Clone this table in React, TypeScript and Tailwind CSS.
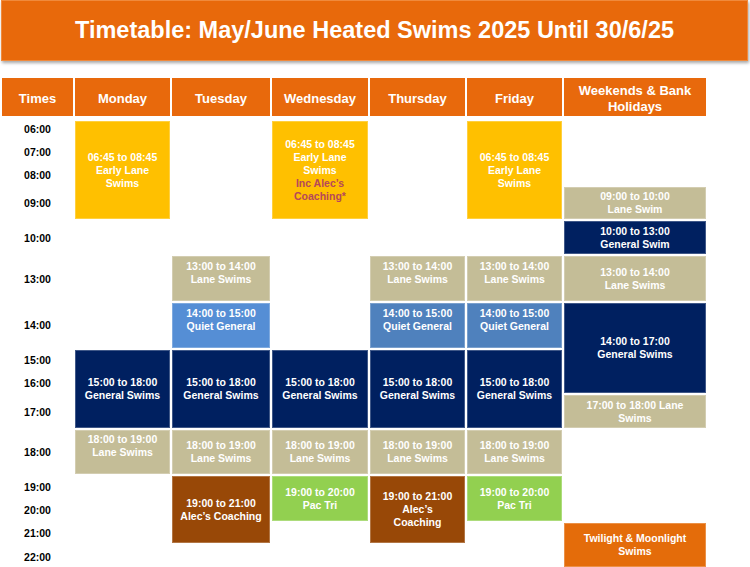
import type { JSX } from "react";

type Slot = {
	id: string;
	place: string;
	bg: string;
	lines: string[];
	note?: string[];
	lift?: boolean;
};

const COLS = "grid grid-cols-[71px_95px_98px_96px_95px_95px_142px] gap-[2px]";

const days = ["Monday", "Tuesday", "Wednesday", "Thursday", "Friday"];

// label + height of its slot, so the text centres land on the printed grid
const times: { t: string; h: string }[] = [
	{ t: "06:00", h: "h-[23px]" },
	{ t: "07:00", h: "h-[23px]" },
	{ t: "08:00", h: "h-[28px]" },
	{ t: "09:00", h: "h-[35px]" },
	{ t: "10:00", h: "h-[41px]" },
	{ t: "13:00", h: "h-[46px]" },
	{ t: "14:00", h: "h-[35px]" },
	{ t: "15:00", h: "h-[23px]" },
	{ t: "16:00", h: "h-[29px]" },
	{ t: "17:00", h: "h-[40px]" },
	{ t: "18:00", h: "h-[35px]" },
	{ t: "19:00", h: "h-[23px]" },
	{ t: "20:00", h: "h-[23px]" },
	{ t: "21:00", h: "h-[24px]" },
	{ t: "22:00", h: "h-[14px]" }
];

const YELLOW = "bg-[#ffc000]";
const TAN = "bg-[#c4bd97]";
const NAVY = "bg-[#002060]";
const BROWN = "bg-[#984807]";
const GREEN = "bg-[#92d050]";

const slots: Slot[] = [
	// Monday
	{ id: "mon-early", place: "col-start-2 row-start-1 row-span-2", bg: YELLOW, lines: ["06:45 to 08:45", "Early Lane", "Swims"] },
	{ id: "mon-gen", place: "col-start-2 row-start-6 row-span-2", bg: NAVY, lines: ["15:00 to 18:00", "General Swims"] },
	{ id: "mon-lane", place: "col-start-2 row-start-8", bg: TAN, lines: ["18:00 to 19:00", "Lane Swims"], lift: true },
	// Tuesday
	{ id: "tue-lane1", place: "col-start-3 row-start-4", bg: TAN, lines: ["13:00 to 14:00", "Lane Swims"], lift: true },
	{ id: "tue-quiet", place: "col-start-3 row-start-5", bg: "bg-[#558ed5]", lines: ["14:00 to 15:00", "Quiet General"], lift: true },
	{ id: "tue-gen", place: "col-start-3 row-start-6 row-span-2", bg: NAVY, lines: ["15:00 to 18:00", "General Swims"] },
	{ id: "tue-lane2", place: "col-start-3 row-start-8", bg: TAN, lines: ["18:00 to 19:00", "Lane Swims"] },
	{ id: "tue-alec", place: "col-start-3 row-start-9 row-span-2", bg: BROWN, lines: ["19:00 to 21:00", "Alec’s Coaching"] },
	// Wednesday
	{
		id: "wed-early",
		place: "col-start-4 row-start-1 row-span-2",
		bg: YELLOW,
		lines: ["06:45 to 08:45", "Early Lane", "Swims"],
		note: ["Inc Alec’s", "Coaching*"]
	},
	{ id: "wed-gen", place: "col-start-4 row-start-6 row-span-2", bg: NAVY, lines: ["15:00 to 18:00", "General Swims"] },
	{ id: "wed-lane", place: "col-start-4 row-start-8", bg: TAN, lines: ["18:00 to 19:00", "Lane Swims"] },
	{ id: "wed-pac", place: "col-start-4 row-start-9", bg: GREEN, lines: ["19:00 to 20:00", "Pac Tri"] },
	// Thursday
	{ id: "thu-lane1", place: "col-start-5 row-start-4", bg: TAN, lines: ["13:00 to 14:00", "Lane Swims"], lift: true },
	{ id: "thu-quiet", place: "col-start-5 row-start-5", bg: "bg-[#4f81bd]", lines: ["14:00 to 15:00", "Quiet General"], lift: true },
	{ id: "thu-gen", place: "col-start-5 row-start-6 row-span-2", bg: NAVY, lines: ["15:00 to 18:00", "General Swims"] },
	{ id: "thu-lane2", place: "col-start-5 row-start-8", bg: TAN, lines: ["18:00 to 19:00", "Lane Swims"] },
	{ id: "thu-alec", place: "col-start-5 row-start-9 row-span-2", bg: BROWN, lines: ["19:00 to 21:00", "Alec’s", "Coaching"] },
	// Friday
	{ id: "fri-early", place: "col-start-6 row-start-1 row-span-2", bg: YELLOW, lines: ["06:45 to 08:45", "Early Lane", "Swims"] },
	{ id: "fri-lane1", place: "col-start-6 row-start-4", bg: TAN, lines: ["13:00 to 14:00", "Lane Swims"], lift: true },
	{ id: "fri-quiet", place: "col-start-6 row-start-5", bg: "bg-[#4f81bd]", lines: ["14:00 to 15:00", "Quiet General"], lift: true },
	{ id: "fri-gen", place: "col-start-6 row-start-6 row-span-2", bg: NAVY, lines: ["15:00 to 18:00", "General Swims"] },
	{ id: "fri-lane2", place: "col-start-6 row-start-8", bg: TAN, lines: ["18:00 to 19:00", "Lane Swims"] },
	{ id: "fri-pac", place: "col-start-6 row-start-9", bg: GREEN, lines: ["19:00 to 20:00", "Pac Tri"] },
	// Weekends & bank holidays
	{ id: "we-lane1", place: "col-start-7 row-start-2", bg: TAN, lines: ["09:00 to 10:00", "Lane Swim"] },
	{ id: "we-gen1", place: "col-start-7 row-start-3", bg: NAVY, lines: ["10:00 to 13:00", "General Swim"] },
	{ id: "we-lane2", place: "col-start-7 row-start-4", bg: TAN, lines: ["13:00 to 14:00", "Lane Swims"] },
	{ id: "we-gen2", place: "col-start-7 row-start-5 row-span-2", bg: NAVY, lines: ["14:00 to 17:00", "General Swims"] },
	{ id: "we-lane3", place: "col-start-7 row-start-7", bg: TAN, lines: ["17:00 to 18:00 Lane", "Swims"] },
	{ id: "we-twilight", place: "col-start-7 row-start-10 row-span-2", bg: "bg-[#e46c0a]", lines: ["Twilight & Moonlight", "Swims"] }
];

const Block = ({ slot }: { slot: Slot }): JSX.Element => (
	<div
		className={`${slot.place} ${slot.bg} flex flex-col items-center justify-center border border-white/25 text-center text-[10.5px] font-bold leading-[13px] text-white ${
			slot.lift ? "pb-3" : ""
		}`}
	>
		{slot.lines.map(line => (
			<span key={line}>{line}</span>
		))}
		{slot.note?.map(line => (
			<span key={line} className="text-[#b5485a]">
				{line}
			</span>
		))}
	</div>
);

export default function App(): JSX.Element {
	return (
		<div className="h-[567px] w-[750px] overflow-hidden bg-white font-['Liberation_Sans',Arial,sans-serif]">
			<div className="ml-[1px] flex h-[61px] w-[747px] items-center justify-center border border-[#f08a3c] bg-[#e8690b] shadow-[1px_2px_3px_rgba(0,0,0,0.35)]">
				<h1 className="text-[23.5px] font-bold text-white">Timetable: May/June Heated Swims 2025 Until 30/6/25</h1>
			</div>

			<div className={`${COLS} ml-[2px] mt-[17px] h-[38px]`}>
				<div className="flex items-center justify-center bg-[#e8690c] pt-[4px] text-[13px] font-bold text-white">Times</div>
				{days.map(day => (
					<div key={day} className="flex items-center justify-center bg-[#e8690c] pt-[4px] text-[13px] font-bold text-white">
						{day}
					</div>
				))}
				<div className="flex items-center justify-center bg-[#e8690c] pt-[4px] text-center text-[13px] font-bold leading-[16px] text-white">
					Weekends &amp; Bank
					<br />
					Holidays
				</div>
			</div>

			<div className={`${COLS} ml-[2px] mt-[5px] grid-rows-[64px_32px_33px_45px_45px_43px_33px_44px_45px_20px_22px]`}>
				<div className="col-start-1 row-start-1 row-span-11 flex flex-col items-center pt-[1px] text-[10.5px] font-bold leading-[14px] text-black">
					{times.map(time => (
						<div key={time.t} className={time.h}>
							{time.t}
						</div>
					))}
				</div>
				{slots.map(slot => (
					<Block key={slot.id} slot={slot} />
				))}
			</div>
		</div>
	);
}
